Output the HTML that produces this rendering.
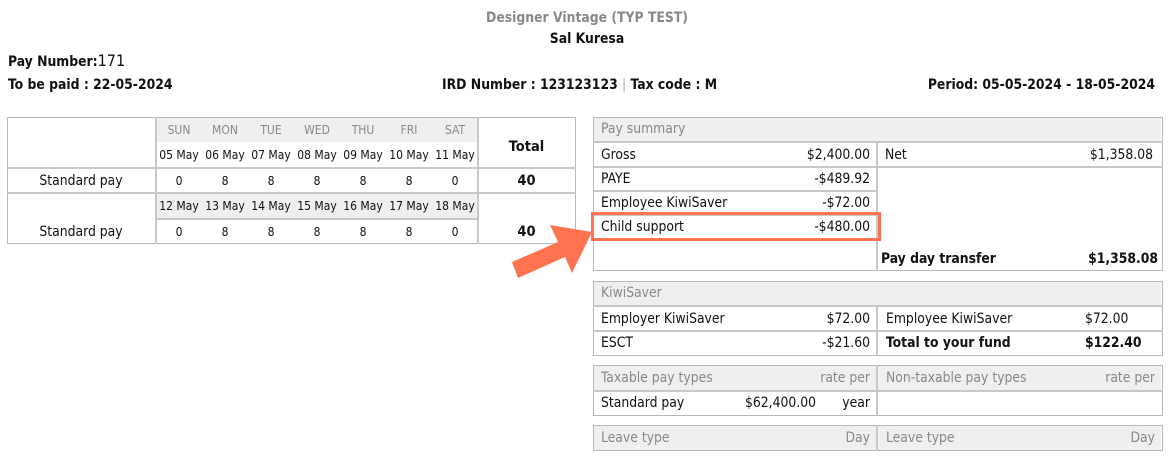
<!DOCTYPE html>
<html><head><meta charset="utf-8"><style>
*{margin:0;padding:0;box-sizing:border-box}
body{width:1171px;height:460px;background:#fff;position:relative;overflow:hidden;font-family:"DejaVu Sans Condensed","DejaVu Sans","Liberation Sans",sans-serif;font-stretch:condensed;font-size:13.8px;color:#111}
.a{position:absolute;white-space:nowrap;line-height:16px}
.b{font-weight:bold}
.g{color:#888}
.box{position:absolute;border:1.5px solid #b8b8b8}
.hl{position:absolute;height:1.5px;background:#c8c8c8}
.vl{position:absolute;width:1.5px;background:#c8c8c8}
.fill{position:absolute;background:#efefef}
.c{text-align:center}
.r{text-align:right}
.s{font-size:12px}
</style></head><body>
<div class="a b g c" style="left:387px;top:10px;width:400px">Designer Vintage (TYP TEST)</div>
<div class="a b c" style="left:387px;top:31px;width:400px">Sal Kuresa</div>
<div class="a b" style="left:8px;top:53px">Pay Number:<span style="font-size:16px;font-weight:normal;font-stretch:normal">171</span></div>
<div class="a b" style="left:8px;top:77px">To be paid : 22-05-2024</div>
<div class="a b" style="left:442px;top:77px">IRD Number : 123123123 <span style="color:#aaa;font-weight:normal">|</span> Tax code : M</div>
<div class="a b r" style="left:855px;top:77px;width:300px">Period: 05-05-2024 - 18-05-2024</div>

<!-- left table -->
<div class="fill" style="left:156px;top:118px;width:322px;height:24px"></div>
<div class="fill" style="left:156px;top:194px;width:322px;height:24px"></div>
<div class="box" style="left:7px;top:117px;width:569px;height:127px"></div>
<div class="vl" style="left:155px;top:117px;height:127px"></div>
<div class="vl" style="left:477px;top:117px;height:127px"></div>
<div class="hl" style="left:7px;top:167px;width:569px"></div>
<div class="hl" style="left:7px;top:192px;width:569px"></div>
<div class="hl" style="left:155px;top:218px;width:322px"></div>
<div class="a b c" style="left:478px;top:139px;width:97px;font-size:14.5px">Total</div>
<div class="a c" style="left:7px;top:173px;width:148px">Standard pay</div>
<div class="a c" style="left:7px;top:224px;width:148px">Standard pay</div>
<div class="a b c" style="left:478px;top:173px;width:97px;font-size:14.5px">40</div>
<div class="a b c" style="left:478px;top:224px;width:97px;font-size:14.5px">40</div>

<!-- pay summary -->
<div class="fill" style="left:594px;top:118px;width:567px;height:23px"></div>
<div class="box" style="left:593px;top:117px;width:570px;height:154px"></div>
<div class="hl" style="left:593px;top:141px;width:570px"></div>
<div class="vl" style="left:876px;top:141px;height:130px"></div>
<div class="hl" style="left:593px;top:166px;width:570px"></div>
<div class="hl" style="left:593px;top:190px;width:283px"></div>
<div class="hl" style="left:593px;top:214px;width:283px"></div>
<div class="hl" style="left:593px;top:238px;width:283px"></div>
<div class="a g" style="left:601px;top:121px">Pay summary</div>
<div class="a" style="left:601px;top:147px">Gross</div><div class="a r" style="left:700px;top:147px;width:170px">$2,400.00</div>
<div class="a" style="left:885px;top:147px">Net</div><div class="a r" style="left:1000px;top:147px;width:153px">$1,358.08</div>
<div class="a" style="left:601px;top:171px">PAYE</div><div class="a r" style="left:700px;top:171px;width:170px">-$489.92</div>
<div class="a" style="left:601px;top:195px">Employee KiwiSaver</div><div class="a r" style="left:700px;top:195px;width:170px">-$72.00</div>
<div class="a" style="left:601px;top:219px">Child support</div><div class="a r" style="left:700px;top:219px;width:170px">-$480.00</div>
<div class="a b" style="left:881px;top:251px">Pay day transfer</div><div class="a b r" style="left:1000px;top:251px;width:158px">$1,358.08</div>
<div style="position:absolute;left:591px;top:212px;width:290px;height:29px;border:3px solid #ff7350"></div>
<svg style="position:absolute;left:0;top:0" width="1171" height="460"><polygon points="592,232 550,225 558,242 512,262 518,278 565,257 572,273" fill="#ff7350"/></svg>

<!-- kiwisaver -->
<div class="fill" style="left:594px;top:282px;width:567px;height:23px"></div>
<div class="box" style="left:593px;top:281px;width:570px;height:75px"></div>
<div class="hl" style="left:593px;top:305px;width:570px"></div>
<div class="hl" style="left:593px;top:330px;width:570px"></div>
<div class="vl" style="left:876px;top:305px;height:51px"></div>
<div class="a g" style="left:601px;top:285px">KiwiSaver</div>
<div class="a" style="left:601px;top:311px">Employer KiwiSaver</div><div class="a r" style="left:700px;top:311px;width:170px">$72.00</div>
<div class="a" style="left:886px;top:311px">Employee KiwiSaver</div><div class="a" style="left:1085px;top:311px">$72.00</div>
<div class="a" style="left:601px;top:335px">ESCT</div><div class="a r" style="left:700px;top:335px;width:170px">-$21.60</div>
<div class="a b" style="left:886px;top:335px">Total to your fund</div><div class="a b" style="left:1085px;top:335px">$122.40</div>

<!-- taxable -->
<div class="fill" style="left:594px;top:366px;width:567px;height:24px"></div>
<div class="box" style="left:593px;top:365px;width:570px;height:51px"></div>
<div class="hl" style="left:593px;top:390px;width:570px"></div>
<div class="vl" style="left:876px;top:365px;height:51px"></div>
<div class="a g" style="left:601px;top:370px">Taxable pay types</div><div class="a g r" style="left:760px;top:370px;width:110px">rate per</div>
<div class="a g" style="left:886px;top:370px">Non-taxable pay types</div><div class="a g r" style="left:1040px;top:370px;width:115px">rate per</div>
<div class="a" style="left:601px;top:395px">Standard pay</div><div class="a" style="left:745px;top:395px">$62,400.00</div><div class="a r" style="left:800px;top:395px;width:70px">year</div>

<!-- leave -->
<div class="fill" style="left:594px;top:426px;width:567px;height:24px"></div>
<div class="box" style="left:593px;top:425px;width:570px;height:26px"></div>
<div class="vl" style="left:876px;top:425px;height:26px"></div>
<div class="a g" style="left:601px;top:430px">Leave type</div><div class="a g r" style="left:760px;top:430px;width:110px">Day</div>
<div class="a g" style="left:886px;top:430px">Leave type</div><div class="a g r" style="left:1040px;top:430px;width:115px">Day</div>

<div style="position:absolute;left:0;top:0">
<div class="a g c s" style="left:156px;top:122px;width:46px">SUN</div><div class="a g c s" style="left:202px;top:122px;width:46px">MON</div><div class="a g c s" style="left:248px;top:122px;width:46px">TUE</div><div class="a g c s" style="left:294px;top:122px;width:46px">WED</div><div class="a g c s" style="left:340px;top:122px;width:46px">THU</div><div class="a g c s" style="left:386px;top:122px;width:46px">FRI</div><div class="a g c s" style="left:432px;top:122px;width:46px">SAT</div>
<div class="a c s" style="left:156px;top:147px;width:46px">05 May</div><div class="a c s" style="left:202px;top:147px;width:46px">06 May</div><div class="a c s" style="left:248px;top:147px;width:46px">07 May</div><div class="a c s" style="left:294px;top:147px;width:46px">08 May</div><div class="a c s" style="left:340px;top:147px;width:46px">09 May</div><div class="a c s" style="left:386px;top:147px;width:46px">10 May</div><div class="a c s" style="left:432px;top:147px;width:46px">11 May</div>
<div class="a c s" style="left:156px;top:173px;width:46px">0</div><div class="a c s" style="left:202px;top:173px;width:46px">8</div><div class="a c s" style="left:248px;top:173px;width:46px">8</div><div class="a c s" style="left:294px;top:173px;width:46px">8</div><div class="a c s" style="left:340px;top:173px;width:46px">8</div><div class="a c s" style="left:386px;top:173px;width:46px">8</div><div class="a c s" style="left:432px;top:173px;width:46px">0</div>
<div class="a c s" style="left:156px;top:198px;width:46px">12 May</div><div class="a c s" style="left:202px;top:198px;width:46px">13 May</div><div class="a c s" style="left:248px;top:198px;width:46px">14 May</div><div class="a c s" style="left:294px;top:198px;width:46px">15 May</div><div class="a c s" style="left:340px;top:198px;width:46px">16 May</div><div class="a c s" style="left:386px;top:198px;width:46px">17 May</div><div class="a c s" style="left:432px;top:198px;width:46px">18 May</div>
<div class="a c s" style="left:156px;top:224px;width:46px">0</div><div class="a c s" style="left:202px;top:224px;width:46px">8</div><div class="a c s" style="left:248px;top:224px;width:46px">8</div><div class="a c s" style="left:294px;top:224px;width:46px">8</div><div class="a c s" style="left:340px;top:224px;width:46px">8</div><div class="a c s" style="left:386px;top:224px;width:46px">8</div><div class="a c s" style="left:432px;top:224px;width:46px">0</div>
</div>
</body></html>
